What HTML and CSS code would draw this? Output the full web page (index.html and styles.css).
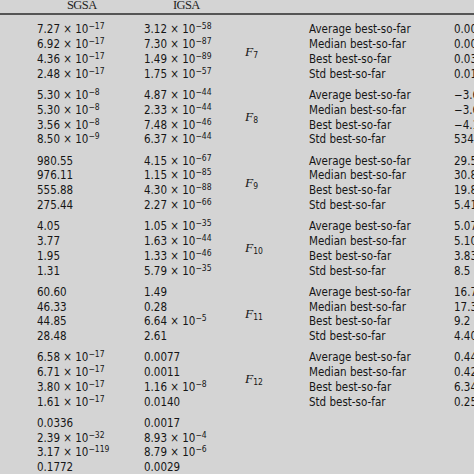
FILE: index.html
```html
<!DOCTYPE html>
<html>
<head>
<meta charset="utf-8">
<link rel="stylesheet" href="styles.css">
</head>
<body>
<table class="results">
  <colgroup>
    <col class="c-pad"><col class="c-sgsa"><col class="c-igsa"><col class="c-fn"><col class="c-stat"><col class="c-last">
  </colgroup>
  <thead>
    <tr><th></th><th class="h-sgsa">SGSA</th><th class="h-igsa">IGSA</th><th></th><th></th><th></th></tr>
  </thead>
  <tbody class="group">
    <tr><td></td><td>7.27 × 10<sup>−17</sup></td><td>3.12 × 10<sup>−58</sup></td><td class="fn" rowspan="4"><i>F</i><sub>7</sub></td><td>Average best-so-far</td><td>0.0067</td></tr>
    <tr><td></td><td>6.92 × 10<sup>−17</sup></td><td>7.30 × 10<sup>−87</sup></td><td>Median best-so-far</td><td>0.0061</td></tr>
    <tr><td></td><td>4.36 × 10<sup>−17</sup></td><td>1.49 × 10<sup>−89</sup></td><td>Best best-so-far</td><td>0.0322</td></tr>
    <tr><td></td><td>2.48 × 10<sup>−17</sup></td><td>1.75 × 10<sup>−57</sup></td><td>Std best-so-far</td><td>0.0134</td></tr>
  </tbody>
  <tbody class="group">
    <tr><td></td><td>5.30 × 10<sup>−8</sup></td><td>4.87 × 10<sup>−44</sup></td><td class="fn" rowspan="4"><i>F</i><sub>8</sub></td><td>Average best-so-far</td><td>−3.6</td></tr>
    <tr><td></td><td>5.30 × 10<sup>−8</sup></td><td>2.33 × 10<sup>−44</sup></td><td>Median best-so-far</td><td>−3.6</td></tr>
    <tr><td></td><td>3.56 × 10<sup>−8</sup></td><td>7.48 × 10<sup>−46</sup></td><td>Best best-so-far</td><td>−4.1</td></tr>
    <tr><td></td><td>8.50 × 10<sup>−9</sup></td><td>6.37 × 10<sup>−44</sup></td><td>Std best-so-far</td><td>534.2</td></tr>
  </tbody>
  <tbody class="group">
    <tr><td></td><td>980.55</td><td>4.15 × 10<sup>−67</sup></td><td class="fn" rowspan="4"><i>F</i><sub>9</sub></td><td>Average best-so-far</td><td>29.55</td></tr>
    <tr><td></td><td>976.11</td><td>1.15 × 10<sup>−85</sup></td><td>Median best-so-far</td><td>30.84</td></tr>
    <tr><td></td><td>555.88</td><td>4.30 × 10<sup>−88</sup></td><td>Best best-so-far</td><td>19.89</td></tr>
    <tr><td></td><td>275.44</td><td>2.27 × 10<sup>−66</sup></td><td>Std best-so-far</td><td>5.41</td></tr>
  </tbody>
  <tbody class="group">
    <tr><td></td><td>4.05</td><td>1.05 × 10<sup>−35</sup></td><td class="fn" rowspan="4"><i>F</i><sub>10</sub></td><td>Average best-so-far</td><td>5.07</td></tr>
    <tr><td></td><td>3.77</td><td>1.63 × 10<sup>−44</sup></td><td>Median best-so-far</td><td>5.10</td></tr>
    <tr><td></td><td>1.95</td><td>1.33 × 10<sup>−46</sup></td><td>Best best-so-far</td><td>3.83</td></tr>
    <tr><td></td><td>1.31</td><td>5.79 × 10<sup>−35</sup></td><td>Std best-so-far</td><td>8.5 ×</td></tr>
  </tbody>
  <tbody class="group">
    <tr><td></td><td>60.60</td><td>1.49</td><td class="fn" rowspan="4"><i>F</i><sub>11</sub></td><td>Average best-so-far</td><td>16.73</td></tr>
    <tr><td></td><td>46.33</td><td>0.28</td><td>Median best-so-far</td><td>17.33</td></tr>
    <tr><td></td><td>44.85</td><td>6.64 × 10<sup>−5</sup></td><td>Best best-so-far</td><td>9.2 ×</td></tr>
    <tr><td></td><td>28.48</td><td>2.61</td><td>Std best-so-far</td><td>4.40</td></tr>
  </tbody>
  <tbody class="group">
    <tr><td></td><td>6.58 × 10<sup>−17</sup></td><td>0.0077</td><td class="fn" rowspan="4"><i>F</i><sub>12</sub></td><td>Average best-so-far</td><td>0.44</td></tr>
    <tr><td></td><td>6.71 × 10<sup>−17</sup></td><td>0.0011</td><td>Median best-so-far</td><td>0.42</td></tr>
    <tr><td></td><td>3.80 × 10<sup>−17</sup></td><td>1.16 × 10<sup>−8</sup></td><td>Best best-so-far</td><td>6.34</td></tr>
    <tr><td></td><td>1.61 × 10<sup>−17</sup></td><td>0.0140</td><td>Std best-so-far</td><td>0.25</td></tr>
  </tbody>
  <tbody class="group">
    <tr><td></td><td>0.0336</td><td>0.0017</td><td class="fn" rowspan="4"></td><td></td><td></td></tr>
    <tr><td></td><td>2.39 × 10<sup>−32</sup></td><td>8.93 × 10<sup>−4</sup></td><td></td><td></td></tr>
    <tr><td></td><td>3.17 × 10<sup>−119</sup></td><td>8.79 × 10<sup>−6</sup></td><td></td><td></td></tr>
    <tr><td></td><td>0.1772</td><td>0.0029</td><td></td><td></td></tr>
  </tbody>
</table>
</body>
</html>
```

FILE: styles.css
```css
html, body {
  margin: 0;
  padding: 0;
  overflow: hidden;
  background: #d4d4d4;
}
body {
  width: 474px;
  height: 474px;
}
.results {
  table-layout: fixed;
  width: 574px;
  border-collapse: collapse;
  margin-top: -2px;
  font-family: "DejaVu Sans Condensed", "DejaVu Sans", sans-serif;
  font-stretch: condensed;
  font-size: 11.5px;
  color: #161616;
}
.c-pad { width: 37px; }
.c-sgsa { width: 107px; }
.c-igsa { width: 101px; }
.c-fn { width: 64px; }
.c-stat { width: 145px; }
.c-last { width: 120px; }

.results th {
  font-family: "Liberation Serif", "Times New Roman", serif;
  font-stretch: normal;
  font-weight: normal;
  font-size: 12.5px;
  letter-spacing: -0.6px;
  line-height: 15px;
  height: 15px;
  padding: 0;
  text-align: left;
  border-bottom: 2px solid #555;
  color: #222;
}
.results th.h-sgsa { padding-left: 30px; }
.results th.h-igsa { padding-left: 29px; }

.results td {
  padding: 0;
  height: 14.8px;
  line-height: 14.8px;
  white-space: nowrap;
  vertical-align: top;
}
.group tr:first-child td {
  padding-top: 6.4px;
}
thead + .group tr:first-child td {
  padding-top: 7.4px;
}
.results td.fn {
  vertical-align: middle;
  font-family: "Liberation Serif", "Times New Roman", serif;
  font-stretch: normal;
  font-size: 13.5px;
}
.fn sub {
  font-family: "DejaVu Sans Condensed", "DejaVu Sans", sans-serif;
  font-stretch: condensed;
  font-size: 8.5px;
  line-height: 0;
  vertical-align: -0.25em;
}
sup {
  font-size: 8.5px;
  line-height: 0;
  vertical-align: 0.5em;
}
```
